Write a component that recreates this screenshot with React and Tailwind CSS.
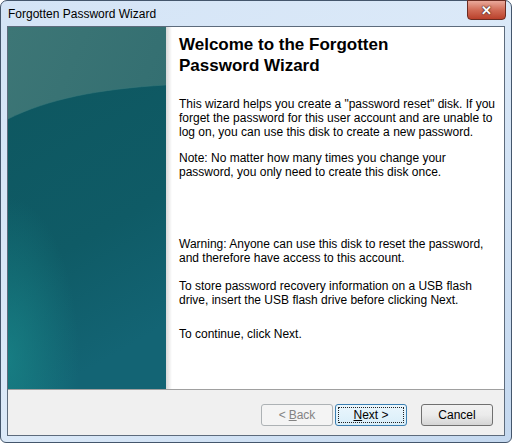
import React from "react";

function SideImage() {
  return (
    <svg width="158" height="362" viewBox="0 0 158 362" className="block">
      <defs>
        <linearGradient id="top" x1="0" y1="0" x2="1" y2="1">
          <stop offset="0" stopColor="#3d7676" />
          <stop offset="1" stopColor="#2d6a6e" />
        </linearGradient>
        <linearGradient id="low" x1="0" y1="0" x2="0.3" y2="1">
          <stop offset="0" stopColor="#0e5760" />
          <stop offset="0.6" stopColor="#0f5b66" />
          <stop offset="1" stopColor="#136474" />
        </linearGradient>
        <radialGradient id="glow" cx="0" cy="0.92" r="0.45">
          <stop offset="0" stopColor="#198689" stopOpacity="0.75" />
          <stop offset="1" stopColor="#198689" stopOpacity="0" />
        </radialGradient>
      </defs>
      <rect width="158" height="362" fill="url(#top)" />
      <path d="M0 92 C 40 72, 90 62, 158 58 L158 362 L0 362 Z" fill="url(#low)" />
      <path d="M0 92 C 40 72, 90 62, 158 58" fill="none" stroke="#3a7a7c" strokeOpacity="0.5" strokeWidth="1" />
      <rect width="158" height="362" fill="url(#glow)" />
    </svg>
  );
}

function Btn({ children, variant }) {
  if (variant === "disabled") {
    return (
      <div className="w-[72px] h-[22px] rounded-[3px] border border-[#adb2b5] bg-[#f4f4f4] flex items-center justify-center text-[#838383]">
        {children}
      </div>
    );
  }
  if (variant === "default") {
    return (
      <div className="w-[72px] h-[22px] rounded-[3px] border border-[#3c7fb1] bg-gradient-to-b from-[#eaf6fd] to-[#d9eef9] p-[2px]">
        <div className="w-full h-full border border-dotted border-[#222] flex items-center justify-center text-black">
          {children}
        </div>
      </div>
    );
  }
  return (
    <div className="w-[72px] h-[22px] rounded-[3px] border border-[#707070] bg-gradient-to-b from-[#f2f2f2] via-[#ebebeb] to-[#d5d5d5] flex items-center justify-center text-black">
      {children}
    </div>
  );
}

export default function App() {
  return (
    <div className="w-[513px] h-[444px] bg-white" style={{ fontFamily: '"Liberation Sans", Arial, sans-serif' }}>
      <div className="w-[512px] h-[443px] rounded-t-[7px] rounded-b-[6px] border border-[#44566c] bg-gradient-to-br from-[#d4e4f6] via-[#dbe9f8] to-[#c4d8ef] flex flex-col px-[6px] pb-[6px] relative">
        <div className="h-[25px] flex items-center pl-[1px] text-[12px] text-black">
          Forgotten Password Wizard
        </div>
        <div className="absolute top-[-1px] right-[5px] w-[39px] h-[20px] rounded-b-[4px] border border-[#6b2c22] bg-gradient-to-b from-[#e9a99b] via-[#d16b56] to-[#b9402b] flex items-center justify-center">
          <span className="text-white font-bold text-[13px] leading-none" style={{ textShadow: "0 0 2px #3a1a14, 0 0 1px #3a1a14" }}>✕</span>
        </div>
        <div className="flex-1 border border-[#5d6b7c] bg-white flex flex-col">
          <div className="flex h-[362px]">
            <SideImage />
            <div className="w-[6px] h-full bg-gradient-to-r from-[#d8d8d8] to-white" />
            <div className="pl-[7px] pt-[7px] text-[12px] leading-[14px] text-black">
              <div className="font-bold text-[17px] leading-[21px] whitespace-nowrap">
                Welcome to the Forgotten<br />Password Wizard
              </div>
              <p className="mt-[21px] whitespace-nowrap">
                This wizard helps you create a "password reset" disk. If you<br />
                forget the password for this user account and are unable to<br />
                log on, you can use this disk to create a new password.
              </p>
              <p className="mt-[12px] whitespace-nowrap">
                Note: No matter how many times you change your<br />
                password, you only need to create this disk once.
              </p>
              <p className="mt-[58px] whitespace-nowrap">
                Warning: Anyone can use this disk to reset the password,<br />
                and therefore have access to this account.
              </p>
              <p className="mt-[14px] whitespace-nowrap">
                To store password recovery information on a USB flash<br />
                drive, insert the USB flash drive before clicking Next.
              </p>
              <p className="mt-[20px] whitespace-nowrap">
                To continue, click Next.
              </p>
            </div>
          </div>
          <div className="flex-1 border-t border-[#a0a0a0] bg-[#f0f0f0] flex justify-end items-start pt-[14px] pr-[11px] text-[12px]">
            <Btn variant="disabled">&lt; <span className="underline ml-[3px]">B</span>ack</Btn>
            <div className="ml-[2px]">
              <Btn variant="default"><span className="underline">N</span>ext &gt;</Btn>
            </div>
            <div className="ml-[14px]">
              <Btn>Cancel</Btn>
            </div>
          </div>
        </div>
      </div>
    </div>
  );
}
